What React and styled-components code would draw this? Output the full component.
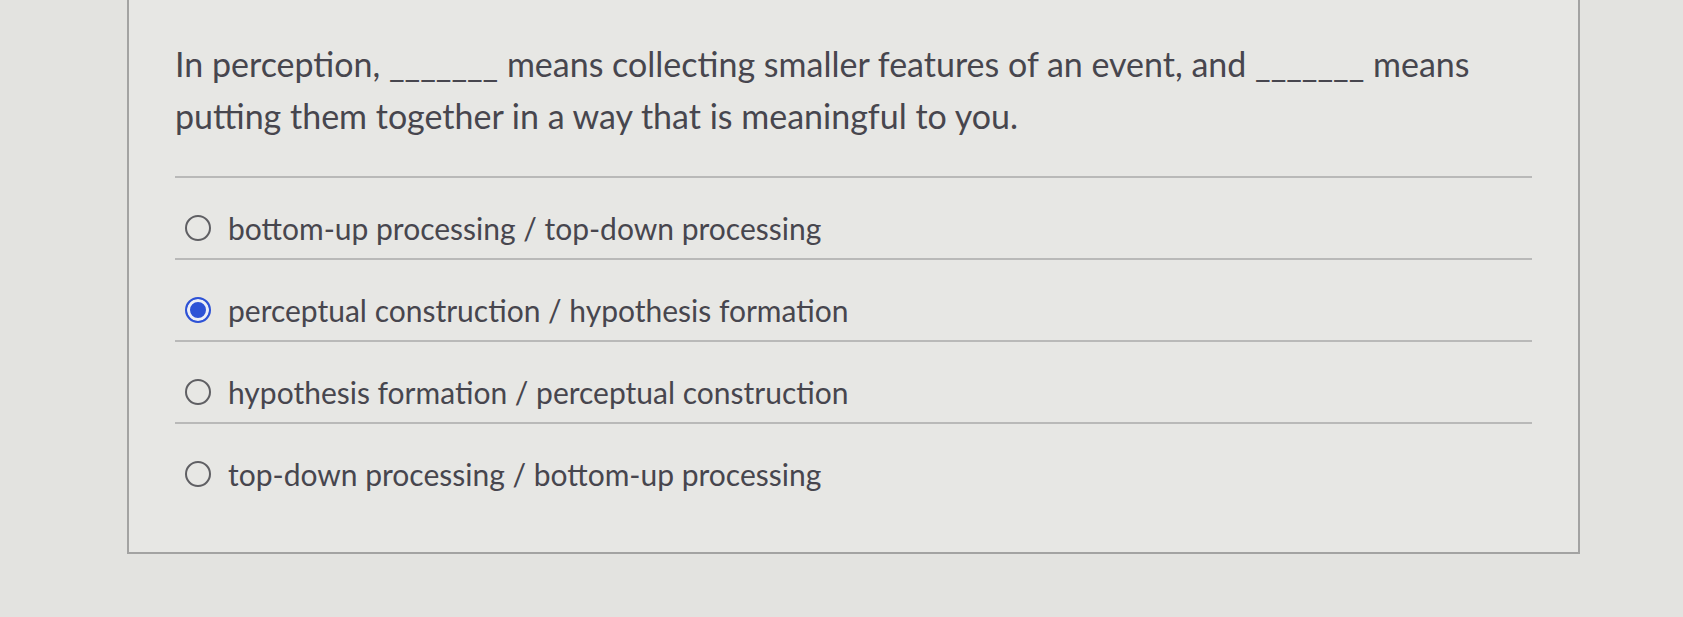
import React from "react";
import styled, { createGlobalStyle } from "styled-components";

const GlobalStyle = createGlobalStyle`
  html, body {
    margin: 0;
    padding: 0;
    background: #e3e3e0;
    font-family: Lato, "Open Sans", sans-serif;
    color: #47464e;
  }
`;

const Page = styled.div`
  width: 1683px;
  height: 617px;
  overflow: hidden;
  padding-left: 127px;
  box-sizing: border-box;
`;

const Card = styled.div`
  width: 1453px;
  height: 554px;
  box-sizing: border-box;
  border: 2px solid #a3a3a2;
  border-top: none;
  background: #e7e7e4;
  padding: 38px 46px 0 46px;
`;

const Question = styled.p`
  margin: 0;
  font-size: 34px;
  line-height: 52px;
  width: 1340px;
`;

const Divider = styled.div`
  height: 2px;
  background: #b9b9b8;
  margin-top: ${(p) => p.$top || 0}px;
`;

const Options = styled.div`
  display: flex;
  flex-direction: column;
`;

const Option = styled.label`
  display: flex;
  align-items: center;
  gap: 17px;
  height: 80px;
  box-sizing: border-box;
  padding: 19px 0 0 10px;
  font-size: 30px;
`;

const Radio = styled.span`
  width: 26px;
  height: 26px;
  box-sizing: border-box;
  border-radius: 50%;
  border: 2px solid ${(p) => (p.$checked ? "#2d52d6" : "#5f5f63")};
  background: ${(p) => (p.$checked ? "#2d52d6" : "transparent")};
  box-shadow: ${(p) => (p.$checked ? "inset 0 0 0 3px #eceef6" : "none")};
  flex-shrink: 0;
`;

const answers = [
  { text: "bottom-up processing / top-down processing" },
  { text: "perceptual construction / hypothesis formation", checked: true },
  { text: "hypothesis formation / perceptual construction" },
  { text: "top-down processing / bottom-up processing" },
];

const App = () => {
  return (
    <Page>
      <GlobalStyle />
      <Card>
        <Question>
          In perception, _______ means collecting smaller features of an event, and _______ means
          putting them together in a way that is meaningful to you.
        </Question>
        <Divider $top={34} />
        <Options>
          {answers.map((a, i) => (
            <React.Fragment key={a.text}>
              <Option>
                <Radio $checked={a.checked} />
                {a.text}
              </Option>
              {i < answers.length - 1 && <Divider />}
            </React.Fragment>
          ))}
        </Options>
      </Card>
    </Page>
  );
};

export default App;
